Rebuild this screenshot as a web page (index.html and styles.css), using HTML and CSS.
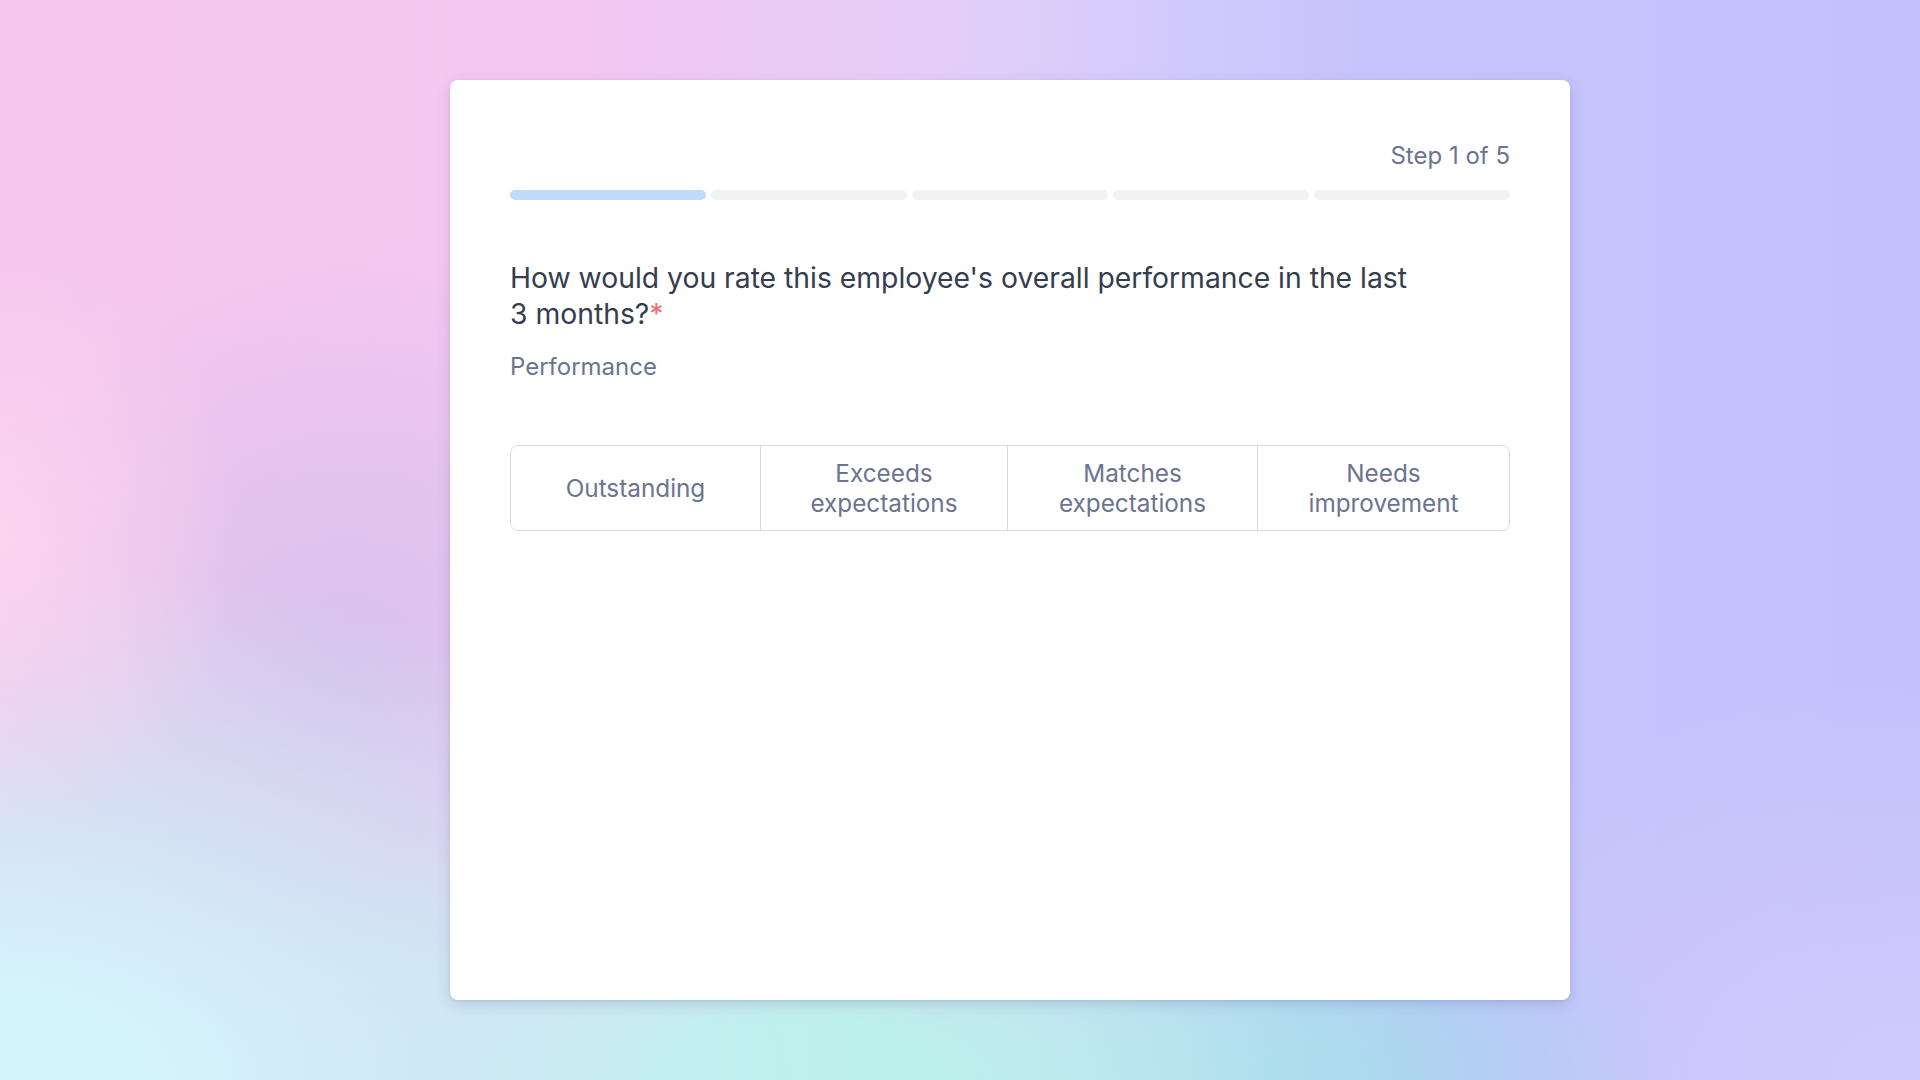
FILE: index.html
```html
<!DOCTYPE html>
<html lang="en">
<head>
<meta charset="utf-8">
<title>Performance review</title>
<link rel="stylesheet" href="styles.css">
</head>
<body>
<main class="page">
  <section class="card">
    <div class="step">Step 1 of 5</div>
    <div class="progress">
      <span class="seg active"></span>
      <span class="seg"></span>
      <span class="seg"></span>
      <span class="seg"></span>
      <span class="seg"></span>
    </div>
    <h1 class="question">How would you rate this employee's overall performance in the last 3 months?<span class="req">*</span></h1>
    <p class="category">Performance</p>
    <div class="options">
      <button class="option">Outstanding</button>
      <button class="option">Exceeds<br>expectations</button>
      <button class="option">Matches<br>expectations</button>
      <button class="option">Needs<br>improvement</button>
    </div>
  </section>
</main>
</body>
</html>
```
FILE: styles.css
```css
* { box-sizing: border-box; }
html, body { margin: 0; height: 100%; }
body {
  font-family: Inter, "Noto Sans", "Liberation Sans", sans-serif;
  background-color: #c4c2fc;
  background-image:
    radial-gradient(ellipse 240px 300px at 0% 50%, rgba(252, 214, 240, 0.9), rgba(252, 214, 240, 0)),
    radial-gradient(ellipse 860px 520px at 0% 100%, rgba(212, 245, 252, 1) 15%, rgba(205, 236, 246, 0.75) 50%, rgba(205, 236, 246, 0)),
    radial-gradient(ellipse 720px 280px at 42% 100%, rgba(188, 240, 236, 1) 20%, rgba(188, 240, 236, 0)),
    radial-gradient(ellipse 380px 240px at 68% 100%, rgba(164, 210, 238, 1) 10%, rgba(164, 210, 238, 0)),
    radial-gradient(ellipse 420px 420px at 18% 62%, rgba(214, 193, 236, 1), rgba(214, 193, 236, 0)),
    radial-gradient(ellipse 600px 400px at 100% 100%, rgba(208, 203, 253, 1), rgba(208, 203, 253, 0)),
    linear-gradient(90deg, #f7c6ef 0%, #f3c7f2 30%, #e6cef8 48%, #d3cbfc 60%, #c6c3fc 72%, #c3c1fc 100%);
}
.page {
  padding: 80px 350px 80px 450px;
  min-height: 100%;
}
.card {
  width: 1120px;
  height: 920px;
  background: #ffffff;
  border-radius: 8px;
  box-shadow: 0 4px 14px rgba(60, 50, 120, 0.16), 0 1px 3px rgba(0, 0, 0, 0.06);
  padding: 60px 60px;
  display: flex;
  flex-direction: column;
}
.step {
  align-self: flex-end;
  font-size: 24px;
  line-height: 32px;
  color: #6b7490;
}
.progress {
  margin-top: 18px;
  display: flex;
  gap: 5px;
}
.seg {
  flex: 1;
  height: 10px;
  border-radius: 5px;
  background: #f1f2f4;
}
.seg.active { background: #bddcfd; }
.question {
  margin: 60px 0 0;
  max-width: 905px;
  font-size: 28.3px;
  line-height: 36px;
  font-weight: 400;
  color: #353d4e;
}
.req { color: #f26d6d; }
.category {
  margin: 19px 0 0;
  font-size: 24px;
  line-height: 32px;
  color: #6b7490;
}
.options {
  margin-top: 62px;
  display: grid;
  grid-template-columns: 249fr 247fr 250fr 252fr;
  border: 1px solid #d6d9e0;
  border-radius: 8px;
  overflow: hidden;
}
.option {
  font-family: inherit;
  font-size: 24.3px;
  line-height: 30px;
  color: #6b7490;
  background: #ffffff;
  border: 0;
  border-left: 1px solid #d6d9e0;
  padding: 12px 8px;
  text-align: center;
  display: flex;
  align-items: center;
  justify-content: center;
}
.option:first-child { border-left: 0; }
```
